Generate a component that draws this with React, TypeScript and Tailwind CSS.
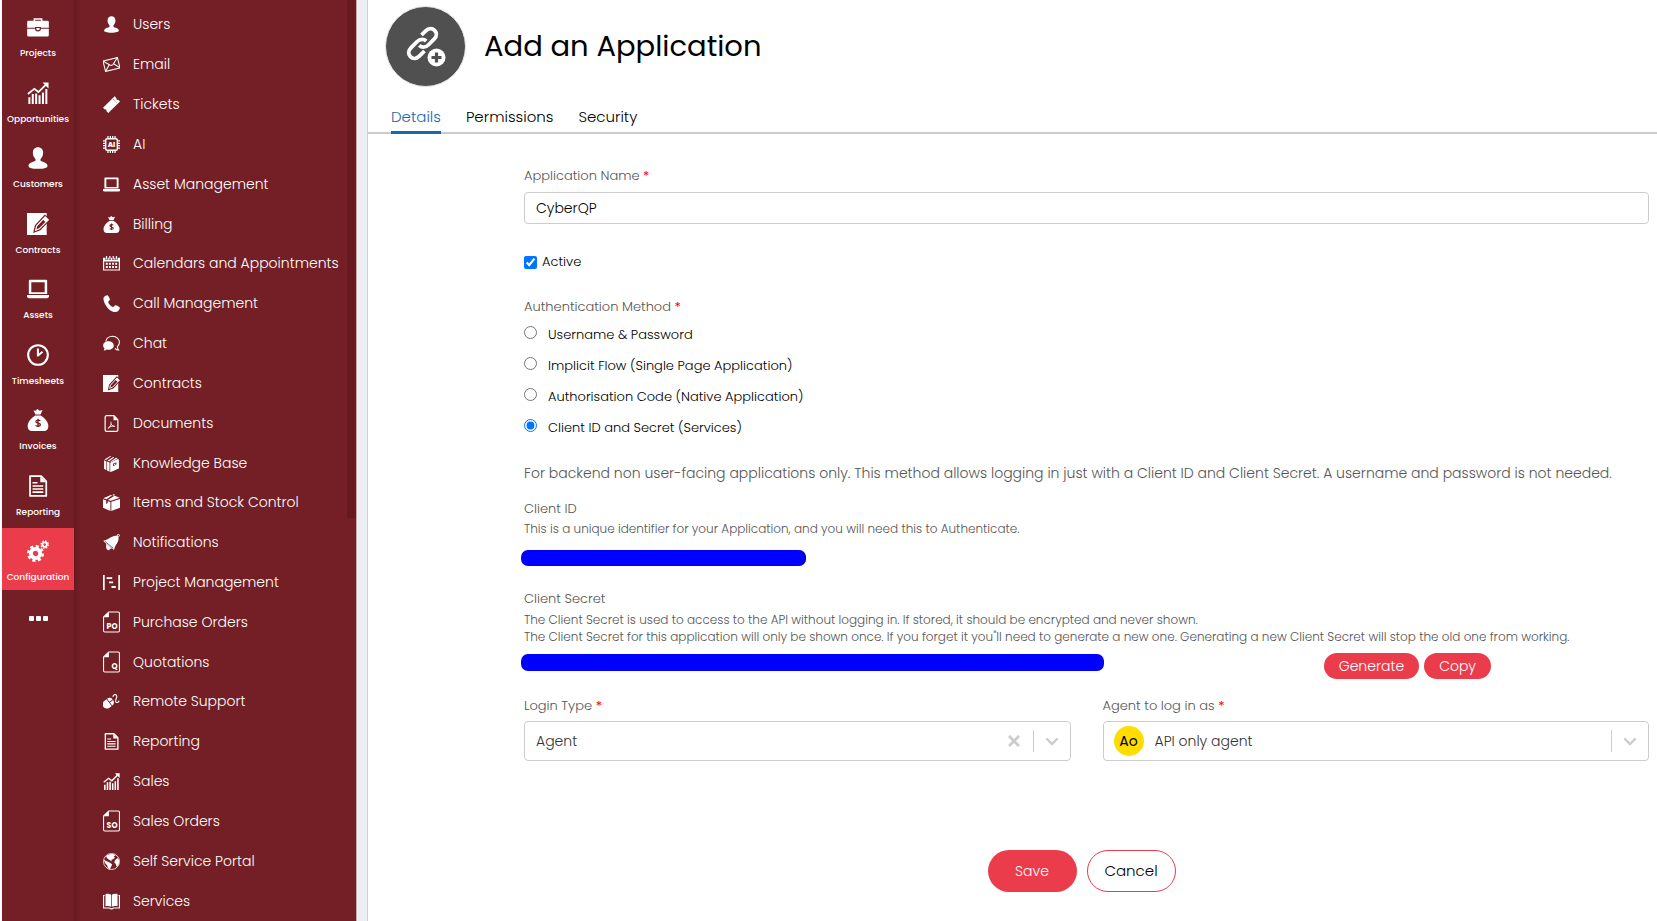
import type { ReactNode } from "react";

function Svg({ children }: { children: ReactNode }) {
  return (
    <svg viewBox="0 0 24 24" fill="currentColor" className="h-full w-full" aria-hidden="true">
      {children}
    </svg>
  );
}

const Briefcase = () => (
  <Svg>
    <path d="M8 5.5V3.2h8v2.3" fill="none" stroke="currentColor" strokeWidth="1.6" />
    <path d="M1.6 5.2h20.8a1.4 1.4 0 0 1 1.4 1.4v6.2h-8.6v-.9H8.8v.9H.2V6.6A1.4 1.4 0 0 1 1.6 5.2z" />
    <path d="M.2 14h8.6c0 1.9 1 2.9 3.2 2.9s3.2-1 3.2-2.9h8.6v7a1.4 1.4 0 0 1-1.4 1.4H1.6A1.4 1.4 0 0 1 .2 21z" />
    <path d="M10.2 13.2h3.6v1c0 .8-.6 1.3-1.8 1.3s-1.8-.5-1.8-1.3z" />
  </Svg>
);

const Growth = () => (
  <Svg>
    <path d="M1 13 8 7.5l4.500 3.500L21 2.500" fill="none" stroke="currentColor" strokeWidth="2" />
    <path d="M17 .5h6.500V7L21.200 4.800 19 2.700z" />
    <path d="M1.500 16.500h2.200V24H1.500zM5.200 13h2.200v11H5.200zM8.900 12.500h2.200V24H8.900zM12.600 14.500h2.200V24h-2.200zM16.300 11.500h2.200V24h-2.200zM20 7.500h2.200V24H20z" />
  </Svg>
);

const Person = () => (
  <Svg>
    <path d="M12 .3c3.400 0 5.600 2.500 5.600 6 0 2.700-1.100 5-2.600 6.500-.5.500-.4 2.200.2 2.600 1 .7 7.200 1.700 7.200 5.200 0 1.900-3.600 3.100-10.400 3.100S1.600 22.500 1.600 20.600c0-3.500 6.200-4.500 7.200-5.200.6-.4.7-2.100.2-2.600C7.500 11.300 6.400 9 6.400 6.300c0-3.500 2.200-6 5.600-6z" />
  </Svg>
);

const Contract = () => (
  <Svg>
    <path d="M0 0h21.500v24H0z" />
    <path d="m19.500 3.500 4 4L14 17.800l-5.500 2 1.300-5.800z" stroke="#731f25" strokeWidth="2.600" />
    <path d="m18 6.800 2.600 2.600M19.800 4.200l3.300 3.300-9.700 9.800-4 1.500 1.100-4.500z" fill="#731f25" stroke="currentColor" strokeWidth="1.300" />
    <path d="m17.800 6.500 2.400-2.500 3 3-2.400 2.500z" />
  </Svg>
);

const Laptop = () => (
  <Svg>
    <path fillRule="evenodd" d="M3 2h18a1 1 0 0 1 1 1v14.500H2V3a1 1 0 0 1 1-1zm1.700 2.500v11h14.600v-11z" />
    <path d="M0 18.500h24V20a2 2 0 0 1-2 2H2a2 2 0 0 1-2-2z" />
  </Svg>
);

const Clock = () => (
  <Svg>
    <circle cx="12" cy="12" r="10.700" fill="none" stroke="currentColor" strokeWidth="2.300" />
    <path d="M10.800 5h2.300v5.300l3.200-2.600 1.300 1.600-5.200 4.300h-1.600z" />
  </Svg>
);

const MoneyBag = () => (
  <Svg>
    <path d="M7 1.500 9.500 2 11.500 0l2.300 1.800L17 1l-2.300 5H9.300z" />
    <path d="M9 7h6c4 2.500 8.300 7 8.300 11.500C23.300 22 21.500 24 18.500 24h-13C2.500 24 .7 22 .7 18.500.7 14 5 9.500 9 7z" />
    <path
      d="M14.500 12.800c-.8-.9-4.800-1.200-4.800 1 0 2.200 4.900 1.100 4.900 3.300s-4.200 2-5.200.8M12 10.700v9"
      fill="none"
      stroke="#731f25"
      strokeWidth="1.500"
    />
  </Svg>
);

const Report = () => (
  <Svg>
    <path d="M4 1.100h11.500L21 6.800v16H3.300V1.100z" fill="none" stroke="currentColor" strokeWidth="1.900" strokeLinejoin="round" />
    <path d="M14.500 1v6.800H21z" />
    <path d="M6 8.500h5.500M6 12h11.800M6 15.300h11.800M6 18.700h11.800" stroke="currentColor" strokeWidth="1.700" />
  </Svg>
);

const Gears = () => (
  <Svg>
    <g fill="none" stroke="currentColor">
      <circle cx="9.300" cy="14.700" r="5" strokeWidth="4.200" />
      <circle cx="9.300" cy="14.700" r="7.900" strokeWidth="2.800" strokeDasharray="3.400 2.800" />
      <circle cx="19.300" cy="5" r="2.400" strokeWidth="1.900" />
      <circle cx="19.300" cy="5" r="3.900" strokeWidth="1.500" strokeDasharray="1.700 1.360" />
    </g>
  </Svg>
);

const Envelope = () => (
  <Svg>
    <g fill="none" stroke="currentColor" strokeWidth="1.500" strokeLinejoin="round" transform="rotate(-14 12 12)">
      <path d="M1.500 4.500h21v15h-21z" />
      <path d="m1.500 4.500 8.200 7.700c1.400 1.200 3.200 1.200 4.600 0l8.200-7.700M1.500 19.500l7.300-7.800M22.500 19.500l-7.300-7.800" />
    </g>
  </Svg>
);

const Ticket = () => (
  <Svg>
    <path d="M0 16.500 16.500.5 19 3c-.5 1.500.7 2.900 2.500 2.400L24 7.800 7.500 24l-2.600-2.500c.5-1.700-.8-3.100-2.600-2.600z" />
    <path d="m14.300 4.300 5.500 5.300" stroke="#731f25" strokeWidth="1" strokeDasharray="1.500 1" />
  </Svg>
);

const Chip = () => (
  <Svg>
    <rect x="3.800" y="3.800" width="16.400" height="16.400" rx="2" fill="none" stroke="currentColor" strokeWidth="2" />
    <path
      d="M7 0v4M10.400 0v4M13.700 0v4M17 0v4M7 20v4M10.400 20v4M13.700 20v4M17 20v4M0 7h4M0 10.400h4M0 13.700h4M0 17h4M20 7h4M20 10.400h4M20 13.700h4M20 17h4"
      stroke="currentColor"
      strokeWidth="1.800"
    />
    <text x="12" y="15.600" textAnchor="middle" fontSize="10" fontWeight="800">AI</text>
  </Svg>
);

const Calendar = () => (
  <Svg>
    <path fillRule="evenodd" d="M0 4h24v18H0zm1.700 5v11.300h20.600V9z" />
    <path d="M5 1.500V7M9.700 1.500V7M14.400 1.500V7M19 1.500V7" stroke="#731f25" strokeWidth="3.200" />
    <path d="M5 1.500v4.700M9.700 1.500v4.700M14.400 1.500v4.700M19 1.500v4.700" stroke="currentColor" strokeWidth="1.700" />
    <path d="M4 12.300h16M4 17h16" stroke="currentColor" strokeWidth="2.800" strokeDasharray="2.800 1.600" />
  </Svg>
);

const Phone = () => (
  <Svg>
    <path d="M1 3.500C2.500 1.200 5 0 6.500.3c1.500 1.500 3 4 3.300 6C9.500 8 7.500 8.500 7.300 10c.6 3 3.700 6.200 6.700 7 1.500-.2 2-2.200 3.700-2.500 2 .3 4.500 1.800 6 3.300.3 1.500-1 4-3.200 5.500-3 1.600-8.500.5-13-4S-.6 6.500 1 3.500z" />
  </Svg>
);

const Chat = () => (
  <Svg>
    <path
      d="M4 9.200C4.500 4.800 8.500 1.800 13.400 1.800c5.500 0 9.800 3.800 9.800 8.600 0 2.700-1.200 4.800-3 6.300.1 1.600.8 3.300 1.800 4.500-2 0-4-.9-5-2.300"
      fill="none"
      stroke="currentColor"
      strokeWidth="1.500"
    />
    <path d="M7.700 8.800c4.300 0 7.500 2.600 7.500 6s-3.200 6-7.500 6c-.8 0-1.600-.1-2.300-.3C4 21.800 2 22 .6 21.700c.9-.8 1.500-1.800 1.300-3C.8 17.700.2 16.500.2 14.800c0-3.400 3.200-6 7.500-6z" />
  </Svg>
);

const Pdf = () => (
  <Svg>
    <path d="M5 1h10.500L21 6.700V21a2 2 0 0 1-2 2H5a2 2 0 0 1-2-2V3a2 2 0 0 1 2-2z" fill="none" stroke="currentColor" strokeWidth="1.700" />
    <path d="M14.800 1v6.500H21z" />
    <path
      d="M11 9.500c1 3 .6 5-3.500 9.500-1.400-.8 4-4 9-3.300 1 1-3.500.8-5.200-3.200"
      fill="none"
      stroke="currentColor"
      strokeWidth="1.300"
    />
  </Svg>
);

const Books = () => (
  <Svg>
    <path d="M1.500 7.500 4.800 9v12.500l-3.300-2zM5.800 9.200l3.400 1.500v12.800L5.800 22z" />
    <path d="m10.200 11 10.800-5.500c1 .5 1.500 1 1.500 2V19L11 24l-.8-.5z" />
    <path d="m2 6.300 8.300-5 1.300.6-7.300 5.300zM6.300 8l8-5.300 1.600.7-7.300 5.500zM10.300 9.600l8-5.600 2.500 1-9.300 5z" />
    <path d="m14 12.500 5-2.300v3.300l-5 2.300z" fill="#731f25" />
    <path d="m15.200 13.200 2.700-1.200v1.200l-2.700 1.200z" />
  </Svg>
);

const Box = () => (
  <Svg>
    <path d="m11.800 11 12.200-4v12.300L11.800 24zM0 7.500l4.500 1.700v5l2.200-1.500v-2.600l3.800 1.300V24L0 19.500z" />
    <path d="M.5 6 11 1.300l2 .6-8 5.400zM6.800 8.300 15 3.200l1.600-.7 7 2.800-12.400 4.300zM13 1.300 15.200.3l2 .9-2.100 1.200z" />
  </Svg>
);

const Bell = () => (
  <Svg>
    <path d="M.3 9.500C6 8.800 9.500 4.500 14.800 3c2-.6 3.900-.8 5.700-.6 1.300 1.200 1.700 3 1.400 5-.8 5.600-5 8.400-6.300 15.200L3 12.500z" />
    <path d="M4.500 18.500c-.3 2 1.300 4.700 4 4.500l1.300-1.400-4-3.800z" />
    <path d="M1 10.500 15 22M4.500 13.500l8 7-5 1-3-3z" />
    <circle cx="21.700" cy="2" r="1.500" fill="none" stroke="currentColor" strokeWidth="1.300" />
    <path d="m2.500 10.200 12 10" stroke="#731f25" strokeWidth="1" />
  </Svg>
);

const Gantt = () => (
  <Svg>
    <path d="M0 1.500h2.400v21H0zM21.600 1.500H24v21h-2.400zM5 4.500h8v2.400H5zM8.500 10.500h5.800v2.600H8.500zM12 17h6v2.600h-6z" />
  </Svg>
);

// Dog-eared page carrying the initials of the document type
function InitialsDoc({ initials }: { initials: string }) {
  return (
    <svg viewBox="0 0 24 30" fill="currentColor" className="h-[22px] w-[17px] shrink-0" aria-hidden="true">
      <path d="M8 1h13.500A1.700 1.700 0 0 1 23.200 2.700v24.600a1.700 1.700 0 0 1-1.700 1.700h-19A1.700 1.700 0 0 1 .8 27.300V8z" fill="none" stroke="currentColor" strokeWidth="1.500" />
      <path d="M8.300.8v7.500H.8z" />
      <text x="20.500" y="24.500" textAnchor="end" fontSize="11" fontWeight="700">{initials}</text>
    </svg>
  );
}

const Mouse = () => (
  <Svg>
    <g transform="rotate(52 8 14)">
      <path d="M2 13.300h12v4a6 6 0 0 1-12 0zM2 12.200c0-3.300 2-5.300 5.400-5.800v5.800zM8.600 6.400c3.400.5 5.400 2.500 5.400 5.800H8.600z" />
    </g>
    <path d="M14 5.500c.3-2.500 3-4.300 5-2.500 2.500 2.500-2.500 6.500-1 9.500 1.200 1.700 4 1 4.800-1.500" fill="none" stroke="currentColor" strokeWidth="1.600" />
  </Svg>
);

const Globe = () => (
  <Svg>
    <circle cx="12" cy="12" r="11.300" fill="none" stroke="currentColor" strokeWidth="1.100" />
    <path d="M6 3.200C9 1.500 13 1 16 2l1.500 1.600-2.300 1.200 1.600 1.800-3.300 2.600-2 .2 1.300 2.500-3-1.500L7 8.500 4.300 5.200z" />
    <path d="M1 9.500c1.500.5 2.500 2 4.500 2.300l5 2.200 2.500 2.300-1.800 3.500-1.500 3.400c-2.200-.3-3.400-3-3.700-5.500L3 14.500z" />
    <path d="m17.500 9.500 3.500-2.500L23 11l-1 5.500-2.800 2.800-1.200-3.800-2.200-2.500z" />
  </Svg>
);

const OpenBook = () => (
  <Svg>
    <path d="M3.500 1.500c3-.6 6-.3 8 .8v17.200c-2-1.200-5-1.400-8-.8zM20.500 1.500c-3-.6-6-.3-8 .8v17.200c2-1.200 5-1.400 8-.8z" />
    <path d="M2.300 3.500H.8v17.700h8.700c.5 1 1.200 1.300 2.500 1.300s2-.3 2.500-1.300h8.700V3.500h-1.500" fill="none" stroke="currentColor" strokeWidth="1.600" />
  </Svg>
);

const modules = [
  { name: "Projects", icon: <Briefcase /> },
  { name: "Opportunities", icon: <Growth /> },
  { name: "Customers", icon: <Person /> },
  { name: "Contracts", icon: <Contract /> },
  { name: "Assets", icon: <Laptop /> },
  { name: "Timesheets", icon: <Clock /> },
  { name: "Invoices", icon: <MoneyBag /> },
  { name: "Reporting", icon: <Report /> },
  { name: "Configuration", icon: <Gears />, active: true },
];

const settings = [
  { name: "Users", icon: <Person /> },
  { name: "Email", icon: <Envelope /> },
  { name: "Tickets", icon: <Ticket /> },
  { name: "AI", icon: <Chip /> },
  { name: "Asset Management", icon: <Laptop /> },
  { name: "Billing", icon: <MoneyBag /> },
  { name: "Calendars and Appointments", icon: <Calendar /> },
  { name: "Call Management", icon: <Phone /> },
  { name: "Chat", icon: <Chat /> },
  { name: "Contracts", icon: <Contract /> },
  { name: "Documents", icon: <Pdf /> },
  { name: "Knowledge Base", icon: <Books /> },
  { name: "Items and Stock Control", icon: <Box /> },
  { name: "Notifications", icon: <Bell /> },
  { name: "Project Management", icon: <Gantt /> },
  { name: "Purchase Orders", icon: <InitialsDoc initials="PO" /> },
  { name: "Quotations", icon: <InitialsDoc initials="Q" /> },
  { name: "Remote Support", icon: <Mouse /> },
  { name: "Reporting", icon: <Report /> },
  { name: "Sales", icon: <Growth /> },
  { name: "Sales Orders", icon: <InitialsDoc initials="SO" /> },
  { name: "Self Service Portal", icon: <Globe /> },
  { name: "Services", icon: <OpenBook /> },
];

const authMethods = [
  "Username & Password",
  "Implicit Flow (Single Page Application)",
  "Authorisation Code (Native Application)",
  "Client ID and Secret (Services)",
];

const Required = () => <span className="font-normal text-[#ff0000]">*</span>;

const Chevron = () => (
  <svg viewBox="0 0 20 20" className="mx-2 h-5 w-5 shrink-0 text-[#cccccc]" fill="none" stroke="currentColor" strokeWidth="2.400" strokeLinecap="round" aria-hidden="true">
    <path d="m5 8 5 5 5-5" />
  </svg>
);

function ModuleRail() {
  return (
    <nav className="flex w-[72px] shrink-0 flex-col bg-[#731f25] pt-1">
      <div className="flex h-[586px] flex-col justify-between">
        {modules.map((m) => (
          <a
            key={m.name}
            href="#"
            className={`flex h-[62px] flex-col items-center justify-between pt-3 pb-1 ${m.active ? "bg-[#ea3c4b]" : ""}`}
          >
            <span className="h-[22px] w-[22px]">{m.icon}</span>
            <span className="text-[9px] leading-[18px] font-medium">{m.name}</span>
          </a>
        ))}
      </div>
      <button aria-label="More" className="mt-6 flex justify-center gap-0.5 py-0.5">
        <span className="h-[5px] w-[5px] rounded-[1px] bg-white" />
        <span className="h-[5px] w-[5px] rounded-[1px] bg-white" />
        <span className="h-[5px] w-[5px] rounded-[1px] bg-white" />
      </button>
    </nav>
  );
}

function SettingsMenu() {
  return (
    <div className="flex w-[283px] shrink-0 border-r border-[#c9a9ae] bg-[#731f25]">
      <div className="w-1.5 bg-linear-to-r from-[#661a20] to-[#731f25]" />
      <nav className="flex min-w-0 flex-1 flex-col pt-[5px]">
        {settings.map((s) => (
          <a key={s.name} href="#" className="flex min-h-7 flex-1 items-center gap-[13px] pl-[23px] text-[14px] whitespace-nowrap">
            <span className="flex h-[17px] w-[17px] shrink-0 items-center justify-center">{s.icon}</span>
            {s.name}
          </a>
        ))}
      </nav>
      <div className="h-[56.25%] w-[9px] bg-[#661a20]" />
    </div>
  );
}

function Header() {
  return (
    <header>
      <div className="flex items-center gap-[18px] pt-1.5 pl-[17px]">
        <div className="flex h-[81px] w-[81px] items-center justify-center rounded-full border border-[#e8e8e8] bg-[#505050]">
          <svg viewBox="0 0 42 42" className="h-[42px] w-[42px]" fill="none" aria-hidden="true">
            <g stroke="#fff" strokeWidth="3.800">
              <path d="m16.500 9 4.200-4.200c3-3 6.600-2.800 8.900-.5s2.500 5.900-.5 8.900l-5.800 5.800c-3 3-6.800 2.700-9 .4" />
              <path d="m19.500 25-5.200 5.200c-3 3-6.600 2.800-8.900.5s-2.500-5.900.5-8.900l6.300-6.300c3-3 6.800-2.700 9-.4" />
            </g>
            <circle cx="31.500" cy="31.500" r="11" fill="#505050" />
            <circle cx="31.500" cy="31.500" r="9" fill="#fff" />
            <path d="M31.500 26.500v10M26.500 31.500h10" stroke="#505050" strokeWidth="3.200" />
          </svg>
        </div>
        <h1 className="pb-0.5 text-[29px] leading-10 font-normal">Add an Application</h1>
      </div>
      <div role="tablist" className="mt-[18px] flex gap-[25px] border-b-2 border-[#cccccc] pl-[23px] text-[15px] leading-6">
        <button role="tab" aria-selected="true" className="-mb-0.5 border-b-3 border-[#1a69a8] pb-0.5 text-[#1a69a8]">Details</button>
        <button role="tab" aria-selected="false" className="pb-[3px]">Permissions</button>
        <button role="tab" aria-selected="false" className="pb-[3px]">Security</button>
      </div>
    </header>
  );
}

function ApplicationForm() {
  return (
    <form className="pt-8 pr-2 pl-[156px] text-[13px] leading-5 text-[#555555]">
      <label htmlFor="app-name" className="block">Application Name <Required /></label>
      <input
        id="app-name"
        defaultValue="CyberQP"
        className="mt-1.5 block h-8 w-full rounded border border-[#cccccc] px-[11px] text-[14px] text-black"
      />

      <label className="mt-7 flex items-center gap-[5px] text-black">
        <input type="checkbox" defaultChecked className="h-[13px] w-[13px] accent-[#0075ff]" />
        Active
      </label>

      <fieldset className="mt-[25px]">
        <legend>Authentication Method <Required /></legend>
        <div className="mt-1.5 flex flex-col gap-[7px]">
          {authMethods.map((method, index) => (
            <label key={method} className="flex h-6 items-start gap-[11px] leading-6 text-black">
              <input type="radio" name="auth" defaultChecked={index === 3} className="mt-[3px] h-[13px] w-[13px] accent-[#0075ff]" />
              {method}
            </label>
          ))}
        </div>
      </fieldset>

      <p className="mt-[23px] text-[14px]">
        For backend non user-facing applications only. This method allows logging in just with a Client ID and Client Secret. A username and password is not needed.
      </p>

      <h2 className="mt-4">Client ID</h2>
      <p className="text-[12px]">This is a unique identifier for your Application, and you will need this to Authenticate.</p>
      <div className="mt-[11px] -ml-[3px] h-4 w-[285px] rounded-[7px] border-r border-[#000040] bg-[#0000ff]" />

      <h2 className="mt-[23px]">Client Secret</h2>
      <p className="mt-0.5 text-[12px] leading-[17px]">
        The Client Secret is used to access to the API without logging in. If stored, it should be encrypted and never shown.
        <br />
        The Client Secret for this application will only be shown once. If you forget it you"ll need to generate a new one. Generating a new Client Secret will stop the old one from working.
      </p>
      <div className="mt-2 -ml-[3px] flex items-start justify-between pr-[158px]">
        <div className="mt-px h-[17px] w-[583px] rounded-[7px] bg-[#0000ff]" />
        <div className="flex gap-[5px] text-[14px] text-white">
          <button type="button" className="h-[26px] rounded-full bg-[#ea3c4b] px-[15px]">Generate</button>
          <button type="button" className="h-[26px] rounded-full bg-[#ea3c4b] px-[15px]">Copy</button>
        </div>
      </div>

      <div className="mt-[17px] grid grid-cols-2 gap-8">
        <div>
          <label htmlFor="login-type">Login Type <Required /></label>
          <div className="mt-[5px] flex h-10 items-center rounded border border-[#cccccc]">
            <select id="login-type" className="h-full min-w-0 flex-1 appearance-none pl-[11px] text-[14px] text-[#333333]">
              <option>Agent</option>
            </select>
            <button type="button" aria-label="Clear login type" className="px-[9px] text-[#cccccc]">
              <svg viewBox="0 0 20 20" className="h-5 w-5" stroke="currentColor" strokeWidth="2.800" aria-hidden="true">
                <path d="m5 5 10 10M15 5 5 15" />
              </svg>
            </button>
            <span className="h-[22px] w-px bg-[#cccccc]" />
            <Chevron />
          </div>
        </div>
        <div>
          <label htmlFor="login-agent">Agent to log in as <Required /></label>
          <div className="mt-[5px] flex h-10 items-center rounded border border-[#cccccc] pl-2.5">
            <span className="flex h-[30px] w-[30px] items-center justify-center rounded-full bg-[#ffdd00] text-[14px] font-normal text-black">Ao</span>
            <select id="login-agent" className="h-full min-w-0 flex-1 appearance-none pl-[11px] text-[14px] text-[#333333]">
              <option>API only agent</option>
            </select>
            <span className="h-[22px] w-px bg-[#cccccc]" />
            <Chevron />
          </div>
        </div>
      </div>

      <div className="mt-[89px] mr-2.5 flex justify-center gap-2.5 text-[14px]">
        <button type="submit" className="h-[42px] w-[89px] rounded-full bg-[#ea3c4b] text-white">Save</button>
        <button type="button" className="h-[42px] w-[89px] rounded-full border border-[#ea3c4b] text-[15px] text-black">Cancel</button>
      </div>
    </form>
  );
}

export default function App() {
  return (
    <div className="flex min-h-screen bg-white pl-0.5 font-['Poppins','Inter',sans-serif] font-light">
      <div className="flex text-white">
        <ModuleRail />
        <SettingsMenu />
      </div>
      <div className="w-[11px] shrink-0 border-r border-[#c8d3dd] bg-[#ebeff5]" />
      <main className="min-w-0 flex-1 text-black">
        <Header />
        <ApplicationForm />
      </main>
    </div>
  );
}
